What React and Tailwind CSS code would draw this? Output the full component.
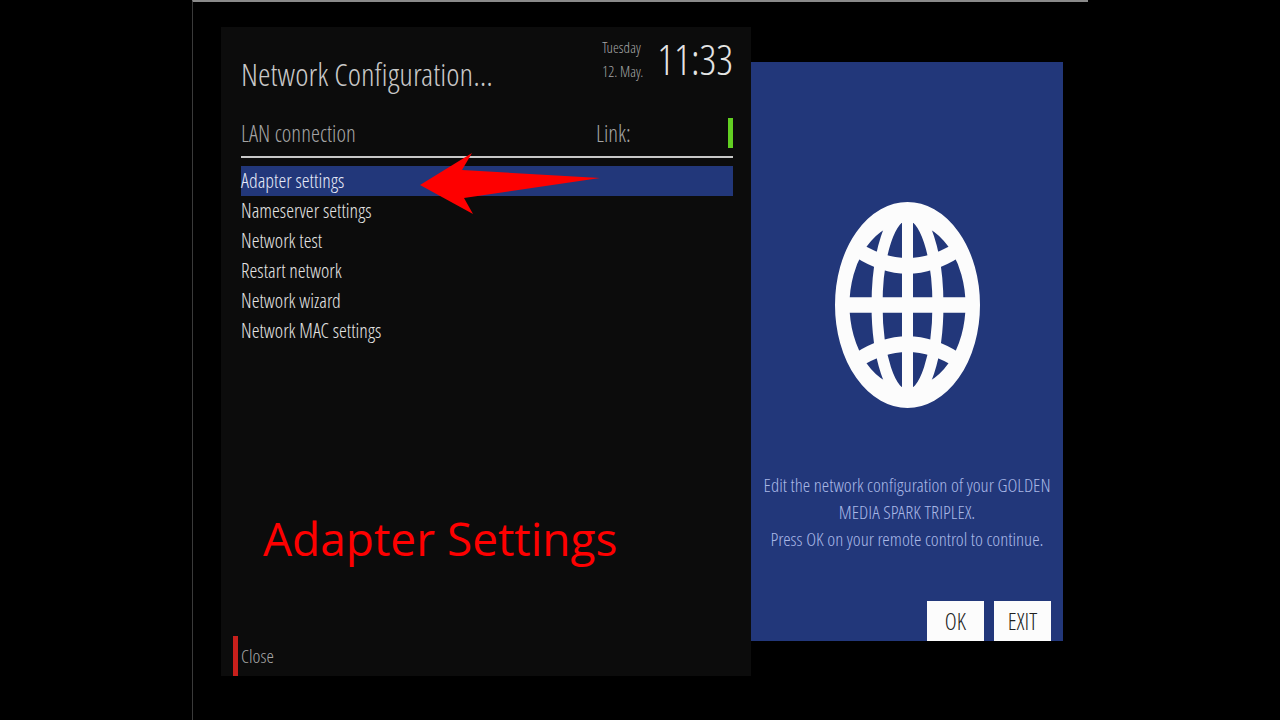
const MENU = [
  "Adapter settings",
  "Nameserver settings",
  "Network test",
  "Restart network",
  "Network wizard",
  "Network MAC settings",
];

function Globe() {
  return (
    <svg
      viewBox="0 0 100 100"
      preserveAspectRatio="none"
      className="h-[206px] w-[145px]"
      fill="none"
      stroke="#fcfcfc"
      strokeWidth="7.6"
      aria-hidden="true"
    >
      <circle cx="50" cy="50" r="45" strokeWidth="10" />
      <ellipse cx="50" cy="50" rx="21" ry="45" />
      <path d="M50 6V94M6 50H94" />
      <path d="M15 23Q50 39 85 23M15 77Q50 61 85 77" />
    </svg>
  );
}

/* Red pointer that lies over the selected entry */
function Arrow() {
  return (
    <svg
      viewBox="0 0 182 62"
      className="pointer-events-none absolute -top-3.5 left-[178px] h-[62px] w-[182px]"
      aria-hidden="true"
    >
      <path d="M1 33L53 1L43 18L181 26L45 46L54 62Z" fill="#fe0000" />
    </svg>
  );
}

export default function App() {
  return (
    <div className="min-h-screen bg-black font-['Open_Sans_Condensed_Light','Open_Sans',sans-serif] text-[#c8c8c8]">
      <div className="mx-auto min-h-screen w-[70%] border-l border-t-2 border-l-[#3a3a3a] border-t-[#8a8a8a] pl-7 pr-[25px] pt-[25px]">
        <div className="grid grid-cols-[17fr_10fr] items-start">
          <main className="flex min-h-[649px] flex-col bg-[#0c0c0c]">
            <div className="pl-5 pr-[18px]">
              <header className="flex h-[91px] items-start justify-between pt-2">
                <h1 className="pt-4 text-[32px] leading-[46px]">Network Configuration...</h1>
                <div className="flex gap-3.5">
                  <p className="text-[15px] leading-6 text-[#a8a8a8]">
                    Tuesday
                    <br />
                    12. May.
                  </p>
                  <time className="text-[42px] leading-12 text-[#e4e4e4]">11:33</time>
                </div>
              </header>

              <div className="flex h-10 items-center border-b-2 border-[#c8c8c8] pb-2 text-[23px] text-[#a4a4a4]">
                <span className="w-[355px]">LAN connection</span>
                <span>Link:</span>
                <span className="ml-auto h-[30px] w-[5px] bg-[#62cf22]" />
              </div>

              <nav className="relative mt-2 flex flex-col">
                {MENU.map((label, i) => (
                  <button
                    key={label}
                    type="button"
                    className={`h-[30px] text-left text-[20px] leading-[30px] ${
                      i === 0 ? "bg-[#22377a] text-[#e6eaf8]" : "text-[#e4e4e4]"
                    }`}
                  >
                    {label}
                  </button>
                ))}
                <Arrow />
              </nav>
            </div>

            <p className="mt-auto px-[42px] pb-[58px] font-['Open_Sans',sans-serif] text-[46px] leading-[80px] text-[#fe0000]">
              Adapter Settings
            </p>
            <button
              type="button"
              className="ml-3 h-10 self-start border-l-[5px] border-[#c8201c] pl-[3px] text-[19px] text-[#a8a8a8]"
            >
              Close
            </button>
          </main>

          <aside className="mt-[35px] flex min-h-[579px] flex-col items-center bg-[#22377a]">
            <div className="pt-[140px]">
              <Globe />
            </div>
            <p className="mt-16 px-2 text-center text-[19px] leading-[27px] text-[#a9b8e6]">
              Edit the network configuration of your GOLDEN MEDIA SPARK TRIPLEX.
              <br />
              Press OK on your remote control to continue.
            </p>
            <div className="mr-3 mt-auto flex gap-2.5 self-end">
              <button type="button" className="h-10 w-[57px] bg-[#fcfcfc] text-[23px] text-[#202020]">
                OK
              </button>
              <button type="button" className="h-10 w-[57px] bg-[#fcfcfc] text-[23px] text-[#202020]">
                EXIT
              </button>
            </div>
          </aside>
        </div>
      </div>
    </div>
  );
}
